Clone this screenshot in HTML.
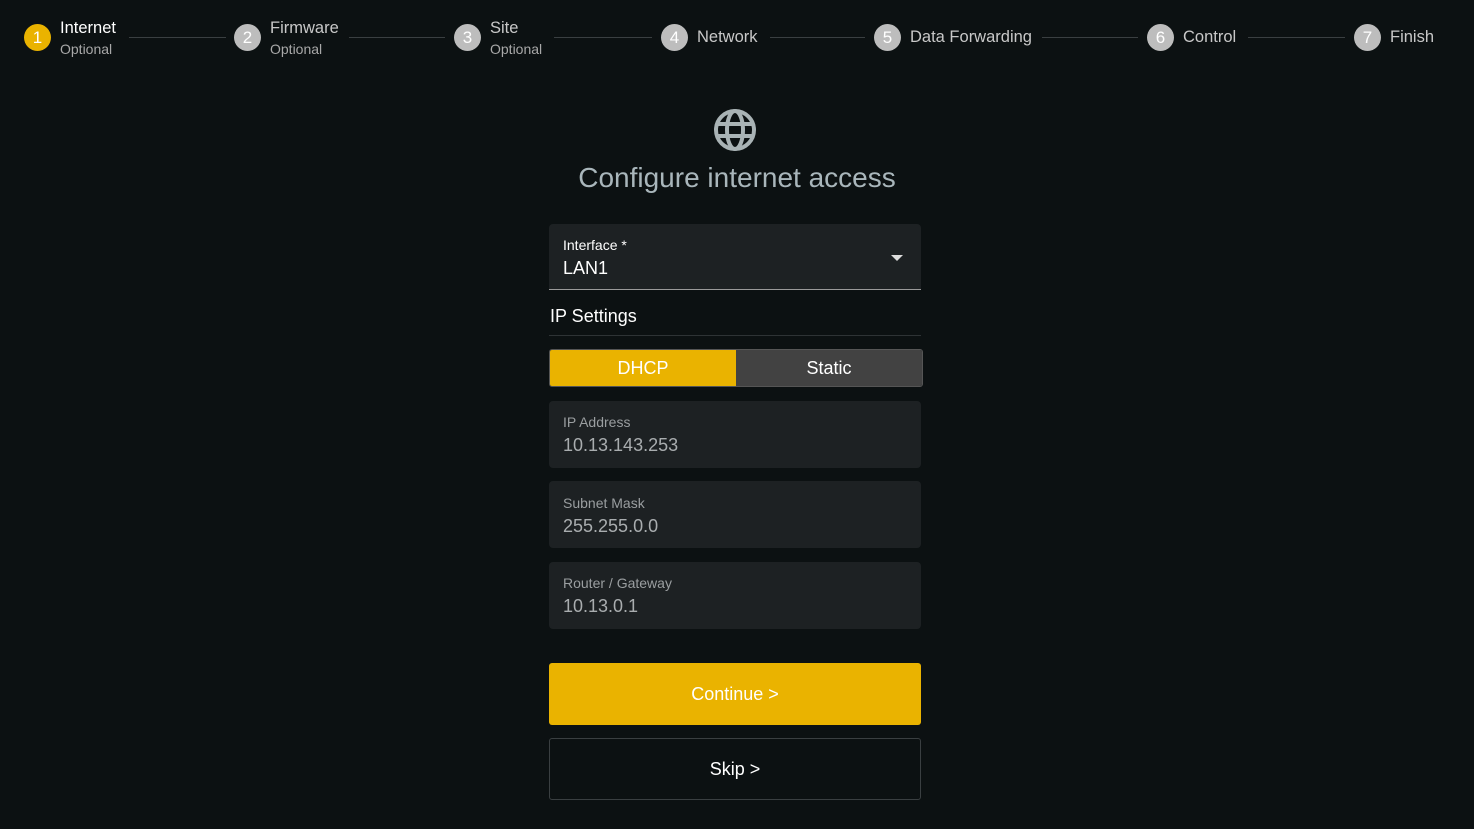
<!DOCTYPE html>
<html><head><style>
*{margin:0;padding:0;box-sizing:border-box}
body{width:1474px;height:829px;background:#0c1112;font-family:"Liberation Sans",sans-serif;position:relative;overflow:hidden;color:#ddd}
.c{position:absolute;top:24px;width:27px;height:27px;border-radius:50%;background:#bdbdbd;color:#fff;font-size:17px;text-align:center;line-height:27px}
.t{position:absolute;font-size:16.5px;color:#c8c8c8}
.s{position:absolute;font-size:14px;color:#a8a8a8;top:41px}
.l{position:absolute;top:37px;height:1px;background:#3a3f41}
.f{position:absolute;left:549px;width:372px;background:#1d2123;border-radius:4px}
.lab{position:absolute;left:14px;font-size:14px;color:#9a9ea0}
.val{position:absolute;left:14px;font-size:18px;color:#a9adaf}
</style></head><body>
<div class="c" style="left:24px;background:#eab300">1</div>
<div class="t" style="left:60px;top:19px;color:#fff">Internet</div><div class="s" style="left:60px">Optional</div>
<div class="l" style="left:129px;width:97px"></div>
<div class="c" style="left:234px">2</div>
<div class="t" style="left:270px;top:19px">Firmware</div><div class="s" style="left:270px">Optional</div>
<div class="l" style="left:349px;width:96px"></div>
<div class="c" style="left:454px">3</div>
<div class="t" style="left:490px;top:19px">Site</div><div class="s" style="left:490px">Optional</div>
<div class="l" style="left:554px;width:98px"></div>
<div class="c" style="left:661px">4</div>
<div class="t" style="left:697px;top:28px">Network</div>
<div class="l" style="left:770px;width:95px"></div>
<div class="c" style="left:874px">5</div>
<div class="t" style="left:910px;top:28px">Data Forwarding</div>
<div class="l" style="left:1042px;width:96px"></div>
<div class="c" style="left:1147px">6</div>
<div class="t" style="left:1183px;top:28px">Control</div>
<div class="l" style="left:1248px;width:97px"></div>
<div class="c" style="left:1354px">7</div>
<div class="t" style="left:1390px;top:28px">Finish</div>

<svg style="position:absolute;left:713px;top:108px" width="44" height="44" viewBox="0 0 44 44" fill="none" stroke="#a9b3b5" stroke-width="4"><circle cx="22" cy="22" r="19"/><ellipse cx="22" cy="22" rx="8" ry="19"/><line x1="3" y1="16" x2="41" y2="16"/><line x1="3" y1="28" x2="41" y2="28"/></svg>
<div style="position:absolute;left:0;width:1474px;top:162px;text-align:center;font-size:28px;color:#a9b6bb">Configure internet access</div>

<div class="f" style="top:224px;height:66px;border-radius:4px 4px 0 0;border-bottom:1px solid #9a9a9a">
<div class="lab" style="top:13px;color:#fff">Interface *</div>
<div class="val" style="top:34px;color:#fff">LAN1</div>
<div style="position:absolute;right:18px;top:31px;border-left:6px solid transparent;border-right:6px solid transparent;border-top:6px solid #ddd"></div>
</div>
<div style="position:absolute;left:550px;top:306px;font-size:18px;color:#fff">IP Settings</div>
<div style="position:absolute;left:549px;top:335px;width:372px;height:1px;background:#2e3335"></div>
<div style="position:absolute;left:549px;top:349px;width:374px;height:38px;border:1px solid #555;border-radius:3px;overflow:hidden;display:flex;font-size:18px">
<div style="width:186px;background:#eab300;color:#fff;text-align:center;line-height:37px">DHCP</div>
<div style="flex:1;background:#424242;color:#fff;text-align:center;line-height:37px">Static</div></div>

<div class="f" style="top:401px;height:67px"><div class="lab" style="top:13px">IP Address</div><div class="val" style="top:34px">10.13.143.253</div></div>
<div class="f" style="top:481px;height:67px"><div class="lab" style="top:14px">Subnet Mask</div><div class="val" style="top:35px">255.255.0.0</div></div>
<div class="f" style="top:562px;height:67px"><div class="lab" style="top:13px">Router / Gateway</div><div class="val" style="top:34px">10.13.0.1</div></div>

<div style="position:absolute;left:549px;top:663px;width:372px;height:62px;background:#eab300;border-radius:3px;color:#fff;font-size:18px;text-align:center;line-height:63px">Continue &gt;</div>
<div style="position:absolute;left:549px;top:738px;width:372px;height:62px;border:1px solid #3a3f41;border-radius:3px;color:#fff;font-size:18px;text-align:center;line-height:61px">Skip &gt;</div>
</body></html>
